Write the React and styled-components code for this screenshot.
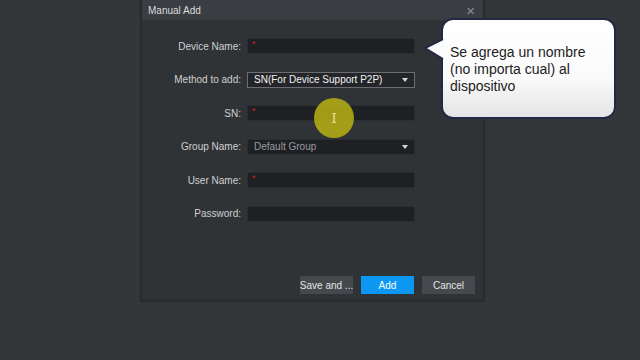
import React from 'react'
import styled, { createGlobalStyle } from 'styled-components'

const Global = createGlobalStyle`
  body {
    margin: 0;
    background: #34373a;
    font-family: "Liberation Sans", Arial, sans-serif;
  }
`

const fields = [
  { label: 'Device Name:', kind: 'input', required: true },
  { label: 'Method to add:', kind: 'select', value: 'SN(For Device Support P2P)', active: true },
  { label: 'SN:', kind: 'input', required: true },
  { label: 'Group Name:', kind: 'select', value: 'Default Group' },
  { label: 'User Name:', kind: 'input', required: true },
  { label: 'Password:', kind: 'input' },
]

function App() {
  return (
    <>
      <Global />
      <Screen>
        <Dialog>
          <TitleBar>
            <span>Manual Add</span>
            <Close>×</Close>
          </TitleBar>
          <Form>
            {fields.map(f => (
              <Row key={f.label}>
                <Label>{f.label}</Label>
                {f.kind === 'input' ? (
                  <Field>{f.required && <Star>*</Star>}</Field>
                ) : (
                  <Select active={f.active}>
                    <span>{f.value}</span>
                    <Caret />
                  </Select>
                )}
              </Row>
            ))}
          </Form>
          <Footer>
            <Button>Save and ...</Button>
            <Button primary>Add</Button>
            <Button>Cancel</Button>
          </Footer>
        </Dialog>
        <Highlight>
          <Beam>I</Beam>
        </Highlight>
        <Bubble>
          <Tail width="20" height="24" viewBox="0 0 20 24">
            <path d="M19 1 L1 10 L19 21" fill="#fbfbfb" stroke="#232843" strokeWidth="2" strokeLinejoin="round" />
          </Tail>
          Se agrega un nombre
          <br />
          (no importa cual) al
          <br />
          dispositivo
        </Bubble>
      </Screen>
    </>
  )
}

export default App

const Screen = styled.div`
  position: relative;
  width: 640px;
  height: 360px;
  overflow: hidden;
  padding-left: 141px;
  box-sizing: border-box;
`
const Dialog = styled.div`
  width: 343px;
  height: 301px;
  box-sizing: border-box;
  background: #303336;
  border: 1px solid #24272a;
  border-top: none;
  box-shadow: 0 0 0 2px #2e3134;
  display: flex;
  flex-direction: column;
`
const TitleBar = styled.div`
  height: 20px;
  background: #3a3d41;
  display: flex;
  align-items: center;
  justify-content: space-between;
  padding: 0 8px 0 6px;
  font-size: 10px;
  color: #dcdcdc;
`
const Close = styled.span`
  font-size: 15px;
  color: #8d9095;
  line-height: 1;
`
const Form = styled.div`
  display: flex;
  flex-direction: column;
  gap: 17.5px;
  padding-top: 18px;
  flex: 1;
`
const Row = styled.div`
  display: grid;
  grid-template-columns: 99px 168px;
  column-gap: 6px;
  align-items: center;
  height: 16px;
`
const Label = styled.div`
  text-align: right;
  font-size: 10px;
  color: #cfd0d2;
`
const Field = styled.div`
  height: 16px;
  box-sizing: border-box;
  background: #1e2023;
  border: 1px solid #2a2d31;
  position: relative;
`
const Star = styled.span`
  position: absolute;
  left: 4px;
  top: 0px;
  font-size: 9px;
  color: #c62828;
`
const Select = styled.div`
  height: 16px;
  box-sizing: border-box;
  background: ${p => (p.active ? '#232529' : '#1e2023')};
  border: 1px solid ${p => (p.active ? '#6a6e73' : '#2a2d31')};
  display: flex;
  align-items: center;
  justify-content: space-between;
  padding: 0 6px 0 6px;
  font-size: 10px;
  color: ${p => (p.active ? '#f2f2f2' : '#9a9c9f')};
`
const Caret = styled.span`
  width: 0;
  height: 0;
  border-left: 3.5px solid transparent;
  border-right: 3.5px solid transparent;
  border-top: 4px solid #d8d8d8;
`
const Footer = styled.div`
  display: flex;
  justify-content: flex-end;
  gap: 8px;
  padding: 0 8px 6px 0;
`
const Button = styled.div`
  width: 53px;
  height: 18px;
  display: flex;
  align-items: center;
  justify-content: center;
  font-size: 10px;
  white-space: nowrap;
  overflow: hidden;
  background: ${p => (p.primary ? '#0c98f2' : '#45484c')};
  color: ${p => (p.primary ? '#ffffff' : '#e4e4e4')};
`
const Highlight = styled.div`
  position: absolute;
  left: 314px;
  top: 98px;
  width: 40px;
  height: 40px;
  border-radius: 50%;
  background: rgba(186, 178, 20, 0.85);
  display: flex;
  align-items: center;
  justify-content: center;
`
const Beam = styled.span`
  font-family: "DejaVu Serif", serif;
  font-size: 13px;
  color: #e6e0a0;
`
const Bubble = styled.div`
  position: absolute;
  left: 441px;
  top: 18px;
  width: 175px;
  height: 101px;
  box-sizing: border-box;
  border: 2px solid #232843;
  border-radius: 12px;
  background: linear-gradient(#ffffff, #fafafa 60%, #e4e4e6);
  padding: 24px 0 0 7px;
  font-size: 14px;
  line-height: 17px;
  color: #1c1c1c;
`
const Tail = styled.svg`
  position: absolute;
  left: -19px;
  top: 18px;
`
